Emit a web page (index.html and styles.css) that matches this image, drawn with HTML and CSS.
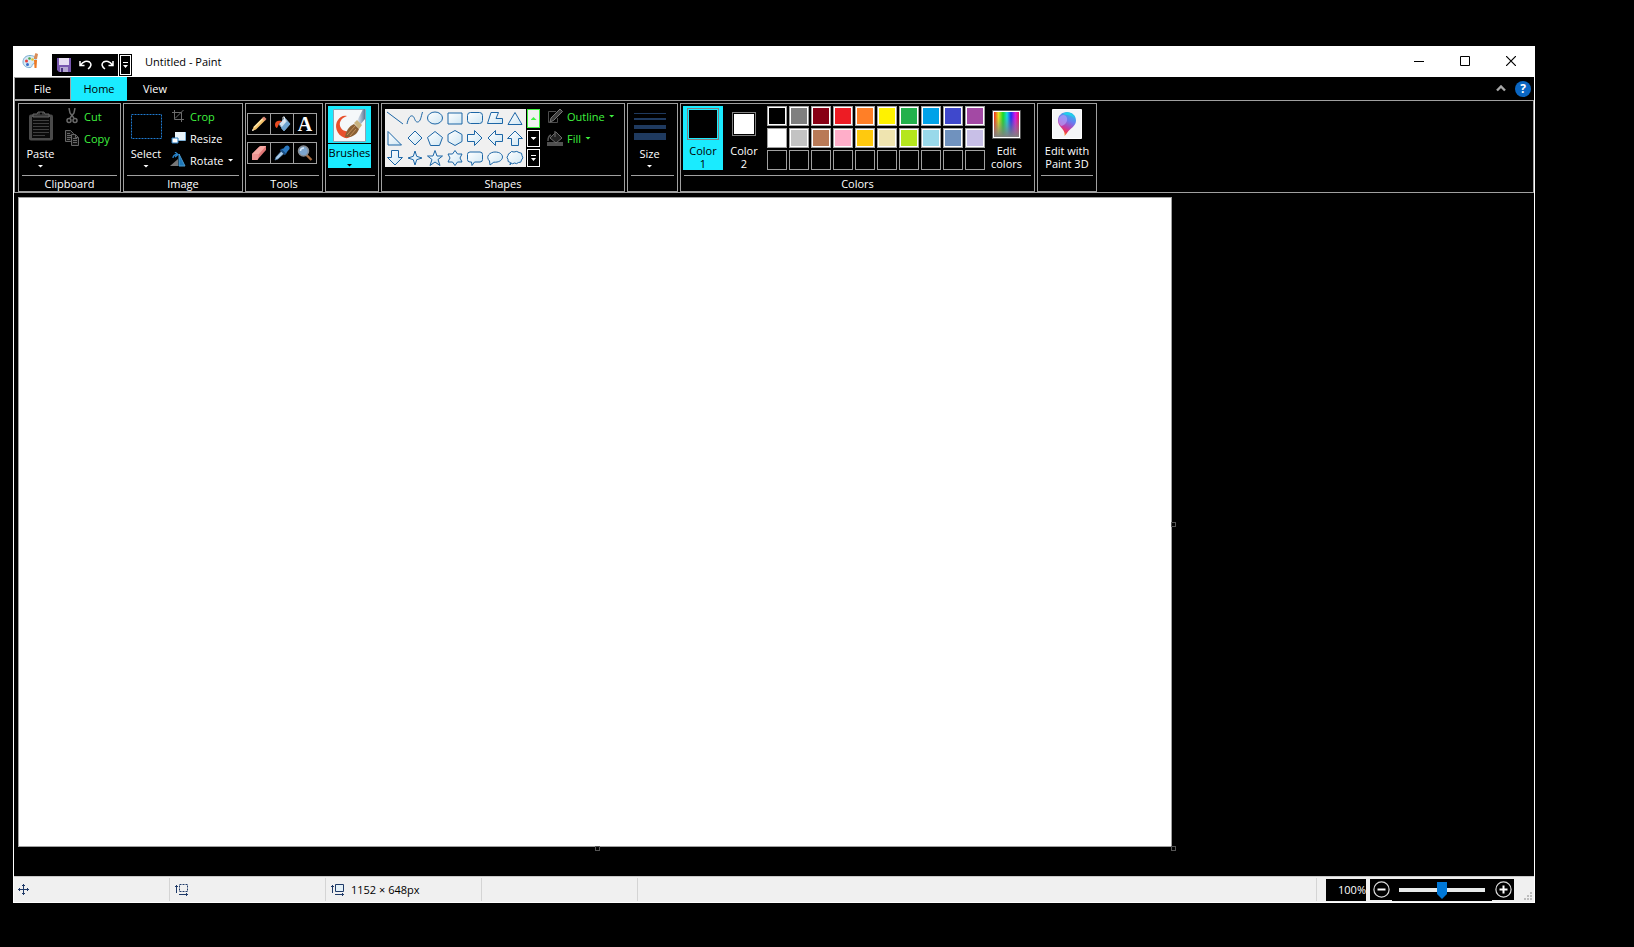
FILE: index.html
```html
<!DOCTYPE html>
<html lang="en">
<head>
<meta charset="utf-8">
<title>Untitled - Paint</title>
<link rel="stylesheet" href="styles.css">
</head>
<body>
<svg class="defs" width="0" height="0" aria-hidden="true">
  <defs>
    <linearGradient id="glass" x1="0" y1="0" x2="1" y2="1"><stop offset="0" stop-color="#fff"/><stop offset="1" stop-color="#cfe6f3"/></linearGradient>
    <linearGradient id="rainbow"><stop offset="0" stop-color="#f02a1c"/><stop offset=".18" stop-color="#e8e020"/><stop offset=".36" stop-color="#18d828"/><stop offset=".52" stop-color="#18d8e0"/><stop offset=".68" stop-color="#2030f0"/><stop offset=".85" stop-color="#d818e8"/><stop offset="1" stop-color="#e81858"/></linearGradient>
    <linearGradient id="fade" x2="0" y2="1"><stop offset=".2" stop-color="#808080" stop-opacity="0"/><stop offset="1" stop-color="#808080"/></linearGradient>
    <linearGradient id="drop" x1=".7" y1="0" x2=".3" y2="1"><stop offset="0" stop-color="#22c4ea"/><stop offset=".35" stop-color="#6a7af0"/><stop offset=".65" stop-color="#c43aa8"/><stop offset=".82" stop-color="#ee3c4c"/><stop offset="1" stop-color="#ffc020"/></linearGradient>
    <linearGradient id="steel"><stop offset="0" stop-color="#e8f0f8"/><stop offset="1" stop-color="#5c7896"/></linearGradient>
  </defs>
</svg>
<div class="window">
  <header class="titlebar">
    <svg class="app-icon" width="17" height="17" viewBox="0 0 17 17"><path d="M1 9c0-4 3-6.500 7-6.500s6 2 6 5-1.500 3-3 3.500 0 3-3 3.500S1 13 1 9z" fill="#d5e9f6" stroke="#7badd0"/><circle cx="4.500" cy="8" r="1.500" fill="#e8403a"/><circle cx="7.500" cy="5.500" r="1.300" fill="#4aa44a"/><circle cx="10.500" cy="6.500" r="1.300" fill="#e3c62c"/><circle cx="5.500" cy="11.500" r="1.500" fill="#3c6cc8"/><path d="M12 7l.5 8h2L15 7z" fill="#ee7a24"/><path d="M12 6V4l1.500-4L16 1l-1 5z" fill="#d98b58"/></svg>
    <div class="quick">
      <button aria-label="Save"><svg width="14" height="14" viewBox="0 0 14 14"><path d="M0 0h14v14H2l-2-2z" fill="#7958b0"/><path d="M2 0h10v7H2z" fill="#e6def2"/><path d="M3 9h8v5H3z" fill="#b5a7d2"/><path d="M4 10h2v4H4z" fill="#4b3580"/></svg></button>
      <button aria-label="Undo"><svg width="13" height="10" viewBox="0 0 13 10"><path d="M1 1v4.500h4.500M1.500 5.200C4 1 8 .5 10.500 2c2.500 2 1.500 5-1.500 7" fill="none" stroke="#fff" stroke-width="1.500"/></svg></button>
      <button aria-label="Redo"><svg width="13" height="10" viewBox="0 0 13 10"><path d="M12 1v4.500H7.500M11.500 5.200C9 1 5 .5 2.500 2 0 4 1 7 4 9" fill="none" stroke="#fff" stroke-width="1.500"/></svg></button>
    </div>
    <button class="quick-more" aria-label="Customize Quick Access Toolbar"><svg width="5" height="6" viewBox="0 0 5 6"><path d="M0 0h5v1H0zM0 3h5L2.500 6z" fill="#fff"/></svg></button>
    <h1 class="title">Untitled - Paint</h1>
    <div class="controls">
      <button aria-label="Minimize"><svg width="10" height="10"><path d="M0 5.500h10" stroke="#000"/></svg></button>
      <button aria-label="Maximize"><svg width="10" height="10"><path d="M.5.500h9v9h-9z" fill="none" stroke="#000"/></svg></button>
      <button aria-label="Close"><svg width="10" height="10"><path d="M0 0l10 10M10 0L0 10" stroke="#000" stroke-width="1.200"/></svg></button>
    </div>
  </header>

  <nav class="tabs">
    <button class="tab file">File</button>
    <button class="tab active">Home</button>
    <button class="tab">View</button>
    <span class="spacer"></span>
    <button class="icon-only" aria-label="Minimize the Ribbon"><svg width="10" height="7" viewBox="0 0 10 7"><path d="M1 5.500l4-4 4 4" fill="none" stroke="#a8a8a8" stroke-width="2.400"/></svg></button>
    <button class="icon-only" aria-label="Help"><span class="help">?</span></button>
  </nav>

  <div class="ribbon">
    <section class="group clipboard">
      <div class="body">
        <button class="big"><span class="pic"><svg width="26" height="32" viewBox="0 0 26 32"><path d="M3 3.500h20q2 0 2 2v22q0 2-2 2H3q-2 0-2-2v-22q0-2 2-2z" fill="#4a4a4a"/><path d="M4 6h18v21H4z" fill="#0b0b0b"/><path d="M5 9.500h16M5 12.500h16M5 15.500h16M5 18.500h16M5 21.500h16M5 24.500h12" stroke="#3f3f3f"/><path d="M5 3h4l1-2h6l1 2h4v3H5z" fill="#383838" stroke="#666"/><circle cx="13" cy="2.500" r="1" fill="#000"/></svg></span>Paste<i class="caret"></i></button>
        <div class="stack">
          <button class="small" disabled><svg width="16" height="16" viewBox="0 0 16 16"><g fill="none" stroke="#6a6a6a" stroke-width="1.500"><path d="M5 0l1 5 4 5M11 0l-1 5-4 5"/><circle cx="5" cy="12.500" r="2"/><circle cx="11" cy="12.500" r="2"/></g></svg>Cut</button>
          <button class="small" disabled><svg width="16" height="16" viewBox="0 0 16 16"><g fill="#141414" stroke="#666"><path d="M1.500.500h5l3 3v8h-8z"/><path d="M3 3.500h3M3 5.500h5M3 7.500h5M3 9.500h3"/><path d="M7.500 4.500h4l3 3v8h-7z"/><path d="M9 8.500h4M9 10.500h4M9 12.500h4M11.500 5v2.500H14" /></g></svg>Copy</button>
        </div>
      </div>
      <h2>Clipboard</h2>
    </section>

    <section class="group image">
      <div class="body">
        <button class="big"><span class="pic"><svg width="31" height="25"><path d="M.5.500h30v24H.5z" fill="none" stroke="#1f7ad0" stroke-dasharray="2 1"/></svg></span>Select<i class="caret"></i></button>
        <div class="stack">
          <button class="small" disabled><svg width="16" height="16" viewBox="0 0 16 16"><path d="M4.500 2v9.500H14M2 4.500h9.500V14M13.500 2L5 10.500" fill="none" stroke="#6c6c6c"/></svg>Crop</button>
          <button class="small"><svg width="16" height="16" viewBox="0 0 16 16"><path d="M5 2h10v9H5z" fill="#eaf5fb"/><path d="M5 10.500h10.500V2" fill="none" stroke="#7fb2d8"/><path d="M2 8h6v5H2z" fill="#fff" stroke="#2a7cc0"/></svg>Resize</button>
          <button class="small"><svg width="16" height="16" viewBox="0 0 16 16"><path d="M0 14h8V7z" fill="#777"/><path d="M9 14V2l6 12z" fill="#1f78b8" stroke="#4b9bd0"/><path d="M3 6c0-2 1.500-3.500 4-3.500M5 0l3 2.500L5 5" fill="none" stroke="#2884cc" stroke-width="1.300"/></svg>Rotate<i class="caret"></i></button>
        </div>
      </div>
      <h2>Image</h2>
    </section>

    <section class="group tools">
      <div class="body">
        <div class="toolgrid">
          <button aria-label="Pencil"><svg width="16" height="16" viewBox="0 0 16 16"><path d="M1 15l1.500-4L12 1.500l2.500 2.500L5 13.500z" fill="#f3c169"/><path d="M2.500 11L12 1.500l1 1-9.500 9.500z" fill="#ffe8a8"/><path d="M11 2.500L13 .5l2.500 2.500-2 2z" fill="#e08a78"/><path d="M1 15l.8-2 1.200 1.200z" fill="#fff"/></svg></button>
          <button aria-label="Fill with color"><svg width="17" height="17" viewBox="0 0 17 17"><path d="M5 8l6-6 5 6-6 7z" fill="#cfe0ee" stroke="#6f93b4"/><path d="M10 15l6-7-3-3-6 7z" fill="#6fa3cf"/><path d="M9 8V1h1.500v6" fill="none" stroke="#dfe9f2"/><path d="M8 5C4 4 1 5 1 8.500c0 2 1 3.500 2 3.500 1.500-2 1-4 5-7z" fill="#e84a20"/></svg></button>
          <button class="letter" aria-label="Text">A</button>
          <button aria-label="Eraser"><svg width="16" height="16" viewBox="0 0 16 16"><path d="M1 9l7-7q1-1 2-1h5v4l-8 9q-1 1-2 1H1z" fill="#e07878"/><path d="M1 9l7-7q1-1 2-1h5L8 9z" fill="#f6a9a3"/><path d="M1 9h7l-1 5.500-1 .5H1z" fill="#ef9492"/></svg></button>
          <button aria-label="Color picker"><svg width="16" height="16" viewBox="0 0 16 16"><path d="M1 15l1-3 6-6.500L10.500 8 4 14z" fill="#a7c9e6" stroke="#4e7ca8" stroke-width=".7"/><path d="M7 4l5 5 1-2 2.500-3Q16 1 13.500.5q-2-.5-4 3z" fill="#2a78c0"/><path d="M6.500 4.500l5 5" stroke="#19518a" stroke-width="2"/></svg></button>
          <button aria-label="Magnifier"><svg width="16" height="16" viewBox="0 0 16 16"><path d="M9.500 10l5 5" stroke="#a86c40" stroke-width="2.400"/><circle cx="6.500" cy="6" r="5" fill="#7da4cc" stroke="#888d94" stroke-width="1.500"/><path d="M3.500 6q0-3 3.500-3" stroke="#d6e8f8" stroke-width="1.500" fill="none"/></svg></button>
        </div>
      </div>
      <h2>Tools</h2>
    </section>

    <section class="group brushes">
      <div class="body">
        <button class="big cyan split"><span class="pic"><svg width="33" height="33" viewBox="0 0 33 33"><path d="M.5.500h32v32H.5z" fill="#f5f8fa" stroke="#8ca4b4"/><path d="M12 29C3 26 1 16 5 11c2-3 5-5 9-4-6 2-9 7-6 12 2 4 8 3 11 5 2 2-3 6-7 5z" fill="#e8502c"/><path d="M24 12l6-12h2v10l-5 6z" fill="url(#steel)"/><path d="M21 14l3-3 5 5-3 4z" fill="#c9b37e"/><path d="M12 28c1-6 4-11 9-13l5 5c-2 6-8 9-14 8z" fill="#8a6034"/><path d="M14 26l8-9M17 27l6-7" stroke="#c4925c"/></svg></span>Brushes<i class="caret"></i></button>
      </div>
      <h2></h2>
    </section>

    <section class="group shapes">
      <div class="body">
        <div class="gallery">
          <button aria-label="Line"><svg viewBox="0 0 18 18"><path d="M1 3l16 12"/></svg></button>
          <button aria-label="Curve"><svg viewBox="0 0 18 18"><path class="open" d="M1 15c1-5 3-9 5.500-8s2 6 5 6S15 8 16.500 3"/></svg></button>
          <button aria-label="Oval"><svg viewBox="0 0 18 18"><ellipse cx="9" cy="9" rx="7.500" ry="6"/></svg></button>
          <button aria-label="Rectangle"><svg viewBox="0 0 18 18"><path d="M2 4h14v11H2z"/></svg></button>
          <button aria-label="Rounded rectangle"><svg viewBox="0 0 18 18"><rect x="1.500" y="3.500" width="15" height="11" rx="3"/></svg></button>
          <button aria-label="Polygon"><svg viewBox="0 0 18 18"><path d="M5 3.500h7.500L10 9.500h6.500v5H1.500z"/></svg></button>
          <button aria-label="Triangle"><svg viewBox="0 0 18 18"><path d="M9 3.500l7 12H2z"/></svg></button>
          <button aria-label="Right triangle"><svg viewBox="0 0 18 18"><path d="M2 2.500v13.500h13.500z"/></svg></button>
          <button aria-label="Diamond"><svg viewBox="0 0 18 18"><path d="M9 2l7 7-7 7-7-7z"/></svg></button>
          <button aria-label="Pentagon"><svg viewBox="0 0 18 18"><path d="M9 2.500l7.500 6-3 8h-9l-3-8z"/></svg></button>
          <button aria-label="Hexagon"><svg viewBox="0 0 18 18"><path d="M9 1.500l7 4v7l-7 4-7-4v-7z"/></svg></button>
          <button aria-label="Right arrow"><svg viewBox="0 0 18 18"><path d="M1.500 5.500h7v-4L16 9l-7.500 7.500v-4h-7z"/></svg></button>
          <button aria-label="Left arrow"><svg viewBox="0 0 18 18"><path d="M16.500 5.500h-7v-4L2 9l7.500 7.500v-4h7z"/></svg></button>
          <button aria-label="Up arrow"><svg viewBox="0 0 18 18"><path d="M5.500 16.500v-7h-4L9 2l7.500 7.500h-4v7z"/></svg></button>
          <button aria-label="Down arrow"><svg viewBox="0 0 18 18"><path d="M5.500 1.500v7h-4L9 16l7.500-7.500h-4v-7z"/></svg></button>
          <button aria-label="Four-point star"><svg viewBox="0 0 18 18"><path d="M9 2l1.700 5.300L16 9l-5.300 1.700L9 16l-1.700-5.300L2 9l5.300-1.700z"/></svg></button>
          <button aria-label="Five-point star"><svg viewBox="0 0 18 18"><path d="M9 1.500l2 5.500h5.500L12 10.500l2 6-5-3.500-5 3.500 2-6L1.500 7H7z"/></svg></button>
          <button aria-label="Six-point star"><svg viewBox="0 0 18 18"><path d="M9 1.500L11.500 5H16l-2 4 2 4h-4.500L9 16.500 6.500 13H2l2-4-2-4h4.500z"/></svg></button>
          <button aria-label="Rounded rectangular callout"><svg viewBox="0 0 18 18"><path d="M4 3h10q2.500 0 2.500 2.500v5q0 2.500-2.500 2.500H8.500L6 16.500 5.500 13H4q-2.500 0-2.500-2.500v-5Q1.500 3 4 3z"/></svg></button>
          <button aria-label="Oval callout"><svg viewBox="0 0 18 18"><path d="M3.500 12C-1 7.500 4 3 9 3s7.500 2.500 7.500 5S14 13 9.500 13.200H7.800L4 16z"/></svg></button>
          <button aria-label="Cloud callout"><svg viewBox="0 0 18 18"><path d="M4 4q1-2.500 4-1 3-1.500 5 .5 3.500 0 3 3 2 2.500-.5 4.500 0 3-3 2.500-2 2-4 .5-2 1.500-3.500 0L4 16l.5-2.500Q1 13 2 10.500 0 8 2 6.500 2 4.500 4 4z"/></svg></button>
        </div>
        <div class="spin">
          <button class="off" aria-label="Scroll up" disabled><i class="caret up"></i></button>
          <button aria-label="Scroll down"><i class="caret"></i></button>
          <button aria-label="More shapes"><svg width="5" height="6" viewBox="0 0 5 6"><path d="M0 0h5v1H0zM0 3h5L2.500 6z" fill="#fff"/></svg></button>
        </div>
        <div class="stack">
          <button class="small" disabled><svg width="16" height="16" viewBox="0 0 16 16"><path d="M9 3.500H1.500v11h9V10" fill="none" stroke="#4c4c4c"/><path d="M3 14l1-4 9-9 2.500 2.500L6.500 12.500z" fill="#3c3c3c" stroke="#777"/></svg>Outline<i class="caret"></i></button>
          <button class="small" disabled><svg width="16" height="16" viewBox="0 0 16 16"><path d="M0 12h16v4H0z" fill="#505050"/><path d="M3 8l6-6 6 6-6 5z" fill="#222" stroke="#6c6c6c"/><path d="M8 7V1M4 5Q1 6 1 11" stroke="#555" stroke-width="1.500" fill="none"/></svg>Fill<i class="caret"></i></button>
        </div>
      </div>
      <h2>Shapes</h2>
    </section>

    <section class="group size">
      <div class="body">
        <button class="big"><span class="pic"><svg width="32" height="30" viewBox="0 0 32 30"><path d="M0 1h32v1H0zM0 6h32v2H0zM0 13h32v4H0zM0 21h32v7H0z" fill="#1f3a5f"/></svg></span>Size<i class="caret"></i></button>
      </div>
      <h2></h2>
    </section>

    <section class="group colors">
      <div class="body">
        <button class="big cyan"><span class="pic"><b class="well primary"></b></span>Color<br>1</button>
        <button class="big"><span class="pic"><b class="well secondary"></b></span>Color<br>2</button>
        <div class="palette">
          <button class="c-black" aria-label="Black"></button><button class="c-gray" aria-label="Gray-50%"></button><button class="c-darkred" aria-label="Dark red"></button><button class="c-red" aria-label="Red"></button><button class="c-orange" aria-label="Orange"></button><button class="c-yellow" aria-label="Yellow"></button><button class="c-green" aria-label="Green"></button><button class="c-turquoise" aria-label="Turquoise"></button><button class="c-indigo" aria-label="Indigo"></button><button class="c-purple" aria-label="Purple"></button>
          <button class="c-white" aria-label="White"></button><button class="c-silver" aria-label="Gray-25%"></button><button class="c-brown" aria-label="Brown"></button><button class="c-rose" aria-label="Rose"></button><button class="c-gold" aria-label="Gold"></button><button class="c-tan" aria-label="Light yellow"></button><button class="c-lime" aria-label="Lime"></button><button class="c-aqua" aria-label="Light turquoise"></button><button class="c-bluegray" aria-label="Blue-gray"></button><button class="c-lavender" aria-label="Lavender"></button>
          <button class="empty" aria-label="Custom 1"></button><button class="empty" aria-label="Custom 2"></button><button class="empty" aria-label="Custom 3"></button><button class="empty" aria-label="Custom 4"></button><button class="empty" aria-label="Custom 5"></button><button class="empty" aria-label="Custom 6"></button><button class="empty" aria-label="Custom 7"></button><button class="empty" aria-label="Custom 8"></button><button class="empty" aria-label="Custom 9"></button><button class="empty" aria-label="Custom 10"></button>
        </div>
        <button class="big edit"><span class="pic"><svg width="29" height="29" viewBox="0 0 29 29"><path d="M.5.500h28v28H.5z" fill="#fff" stroke="#555"/><path d="M2 2h25v25H2z" fill="url(#rainbow)"/><path d="M2 2h25v25H2z" fill="url(#fade)"/></svg></span>Edit<br>colors</button>
      </div>
      <h2>Colors</h2>
    </section>

    <section class="group paint3d">
      <div class="body">
        <button class="big"><span class="pic"><svg width="30" height="30" viewBox="0 0 30 30"><path d="M.5.500h29v29H.5z" fill="#f4f5f7" stroke="#fff"/><path d="M15 3c5 0 9 3.500 9 8.500 0 5-4 7-7.500 10.500-1.500 1.500-2 3.500-4 5 .5-3-.5-5-2.500-7.500-2-2.500-4-4.500-4-8C6 6.500 10 3 15 3z" fill="url(#drop)"/><path d="M7 9c2-4 7-4 8 0s-3 8-6 8c-2-2-3-5-2-8z" fill="#b49cf8" opacity=".7"/><path d="M11 5c4-3 10-1 12 4-4-3-8-3-12-4z" fill="#20d0e8"/></svg></span>Edit with<br>Paint 3D</button>
      </div>
      <h2></h2>
    </section>
  </div>

  <main class="workspace">
    <div class="sheet"><i class="handle right"></i><i class="handle bottom"></i><i class="handle corner"></i></div>
  </main>

  <footer class="status">
    <div class="cell"><svg width="11" height="11" viewBox="0 0 11 11"><path d="M5.500 0v11M0 5.500h11M4 1.500h3M4 9.500h3M1.500 4v3M9.500 4v3" stroke="#1f3a68" fill="none"/></svg></div>
    <div class="cell"><svg width="14" height="12" viewBox="0 0 14 12"><path d="M1.500 1v8M0 2.500h3M4 10.500h9M11.500 9v3" stroke="#1f3a68"/><path d="M4.500.500h8v7h-8z" fill="none" stroke="#1f3a68" stroke-dasharray="2 1"/></svg></div>
    <div class="cell"><svg width="14" height="12" viewBox="0 0 14 12"><path d="M1.500 1v8M0 2.500h3M4 10.500h9M11.500 9v3" stroke="#1f3a68"/><path d="M4.500.500h8v7h-8z" fill="#e4f1f8" stroke="#1f3a68"/></svg><span>1152 × 648px</span></div>
    <div class="cell"></div>
    <div class="cell rest"></div>
    <output class="percent" for="zoom">100%</output>
    <div class="zoom">
      <button aria-label="Zoom out"><svg width="17" height="17" viewBox="0 0 17 17"><circle cx="8.500" cy="8.500" r="7.600" fill="none" stroke="#ddd" stroke-width="1.200"/><path d="M4.500 8.500h8" stroke="#fff" stroke-width="2"/></svg></button>
      <input id="zoom" type="range" min="0" max="100" value="50" aria-label="Zoom">
      <button aria-label="Zoom in"><svg width="17" height="17" viewBox="0 0 17 17"><circle cx="8.500" cy="8.500" r="7.600" fill="none" stroke="#ddd" stroke-width="1.200"/><path d="M4.500 8.500h8M8.500 4.500v8" stroke="#fff" stroke-width="2"/></svg></button>
    </div>
    <svg class="grip" width="8" height="8" viewBox="0 0 8 8"><path d="M6 0h2v2H6zM3 3h2v2H3zM6 3h2v2H6zM0 6h2v2H0zM3 6h2v2H3zM6 6h2v2H6z" fill="#bdbdbd"/></svg>
  </footer>
</div>
</body>
</html>
```
FILE: styles.css
```css
:root {
  --line: #a0a0a0;
  --cyan: #1aebff;
  --green: #3ff23f;
}

* { box-sizing: border-box; }

body {
  margin: 0;
  min-height: 100vh;
  padding: 46px 99px 44px 13px;
  display: flex;
  background: #000;
  color: #fff;
  font: 11px/13px "Open Sans", "Noto Sans", sans-serif;
}

button {
  margin: 0;
  padding: 0;
  border: 0;
  background: none;
  color: inherit;
  font: inherit;
}

svg { display: block; flex: none; }
.defs { position: absolute; }

h1, h2 { margin: 0; font: inherit; }

.window {
  flex: 1;
  min-width: 0;
  display: flex;
  flex-direction: column;
  border: 1px solid #fff;
}

/* Title bar */
.titlebar {
  display: flex;
  align-items: flex-end;
  height: 30px;
  padding-left: 8px;
  background: #fff;
  color: #000;
}
.app-icon { align-self: center; margin-bottom: 2px; }
.quick {
  display: flex;
  height: 22px;
  margin: 0 1px 1px 13px;
  padding-left: 1px;
  width: 66px;
  background: #000;
}
.quick button, .quick-more {
  flex: 1;
  display: flex;
  align-items: center;
  justify-content: center;
}
.quick-more {
  flex: none;
  width: 13px;
  height: 22px;
  margin-bottom: 1px;
  background: #000;
  border: 1px solid #fff;
  outline: 1px solid #000;
  outline-offset: -1px;
  box-shadow: inset 0 0 0 1px #fff;
}
.title { margin-left: 13px; line-height: 30px; }
.controls { display: flex; align-self: stretch; margin-left: auto; }
.controls button {
  width: 46px;
  display: flex;
  align-items: center;
  justify-content: center;
  padding-bottom: 2px;
}

/* Tabs */
.tabs { display: flex; height: 23px; }
.tab { width: 56px; padding-bottom: 1px; }
.tab.file { width: 57px; border: 1px solid var(--line); padding: 0; }
.tab.active {
  height: 24px;
  background: var(--cyan);
  color: #000;
  z-index: 1;
}
.spacer { flex: 1; }
.icon-only { width: 22px; display: flex; align-items: center; justify-content: center; }
.help {
  width: 16px;
  height: 16px;
  border-radius: 8px;
  background: #0a66c2;
  font-weight: bold;
  font-size: 12px;
  line-height: 16px;
}

/* Ribbon */
.ribbon {
  display: flex;
  gap: 2px;
  padding: 2px 3px 0;
  border: 1px solid var(--line);
}
.group {
  display: flex;
  flex-direction: column;
  border: 1px solid var(--line);
}
.clipboard { width: 103px; }
.image { width: 120px; }
.tools { width: 78px; }
.brushes { width: 54px; }
.shapes { width: 244px; }
.size { width: 51px; }
.colors { width: 355px; }
.paint3d { width: 60px; }

.body { display: flex; height: 71px; padding: 1px 2px 0; }
.group h2 {
  height: 16px;
  margin: 0 3px;
  border-top: 1px solid var(--line);
  text-align: center;
  line-height: 15px;
}

.big {
  width: 40px;
  height: 64px;
  margin-top: 1px;
  display: block;
  text-align: center;
  white-space: nowrap;
}
.clipboard .big, .size .big { width: 39px; }
.pic {
  display: flex;
  height: 36px;
  margin-bottom: 2px;
  align-items: center;
  justify-content: center;
}
.cyan { background: var(--cyan); color: #000; }
.brushes .big { width: 43px; height: 62px; }
.split .pic { height: 36px; margin-bottom: 2px; border-bottom: 1px solid #000; }
.paint3d .big { width: 54px; }
.edit { width: 41px; margin-left: 1px; }

.caret {
  display: inline-block;
  width: 6px;
  height: 3px;
  background: currentColor;
  clip-path: polygon(0 0, 100% 0, 50% 100%);
}
.caret.up { clip-path: polygon(50% 0, 100% 100%, 0 100%); }
.big .caret { display: block; margin: 5px auto 0; }

.stack { margin-left: 2px; }
.small {
  display: flex;
  align-items: center;
  gap: 4px;
  height: 22px;
  padding-left: 2px;
}
.small:disabled { color: var(--green); }

.toolgrid {
  display: grid;
  grid-template-columns: repeat(3, 23px);
  grid-auto-rows: 22px;
  row-gap: 7px;
  margin-top: 8px;
}
.tools .body { padding-left: 1px; }
.toolgrid button {
  width: 24px;
  border: 1px solid var(--line);
  display: flex;
  align-items: center;
  justify-content: center;
}
.toolgrid .letter { font: bold 20px/20px "Liberation Serif", serif; }

.gallery {
  display: grid;
  grid-template-columns: repeat(7, 18px);
  grid-auto-rows: 18px;
  gap: 2px;
  height: 58px;
  margin: 4px 1px 0;
  padding: 0 2px 0 1px;
  background: #f0f0f0;
}
.gallery svg {
  width: 18px;
  height: 18px;
  fill: url(#glass);
  stroke: #1c66a6;
}
.gallery .open { fill: none; }
.spin {
  display: grid;
  grid-template-rows: 19px 17px 18px;
  gap: 2px;
  width: 13px;
  height: 58px;
  margin-top: 4px;
}
.spin button {
  display: flex;
  align-items: center;
  justify-content: center;
  border: 1px solid #fff;
}
.spin .off { background: #f0f0f0; border-color: var(--green); color: var(--green); }
.shapes .stack { margin-left: 5px; }

.well { display: block; border: 1px solid #808080; padding: 1px; background-clip: content-box; }
.primary { width: 32px; height: 32px; background-color: #000; }
.secondary { width: 24px; height: 24px; background-color: #fff; }
.cyan + .big { margin-left: 1px; }

.palette {
  display: grid;
  grid-template-columns: repeat(10, 20px);
  grid-auto-rows: 20px;
  gap: 2px;
  margin: 1px 0 0 3px;
}
.palette button { border: 1px solid var(--line); box-shadow: inset 0 0 0 1px #fff; }
.palette .empty { box-shadow: none; }
.c-black { background: #000; }
.c-gray { background: #7f7f7f; }
.c-darkred { background: #880015; }
.c-red { background: #ed1c24; }
.c-orange { background: #ff7f27; }
.c-yellow { background: #fff200; }
.c-green { background: #22b14c; }
.c-turquoise { background: #00a2e8; }
.c-indigo { background: #3f48cc; }
.c-purple { background: #a349a4; }
.c-white { background: #fff; }
.c-silver { background: #c3c3c3; }
.c-brown { background: #b97a57; }
.c-rose { background: #ffaec9; }
.c-gold { background: #ffc90e; }
.c-tan { background: #efe4b0; }
.c-lime { background: #b5e61d; }
.c-aqua { background: #99d9ea; }
.c-bluegray { background: #7092be; }
.c-lavender { background: #c8bfe7; }

/* Drawing area */
.workspace { flex: 1; padding: 4px; }
.sheet {
  position: relative;
  width: 1154px;
  height: 650px;
  border: 1px solid var(--line);
  background: #fff;
}
.handle {
  position: absolute;
  width: 5px;
  height: 5px;
  border: 1px solid #555;
  background: #000;
}
.right { right: -5px; top: 50%; }
.bottom { bottom: -5px; left: 50%; }
.corner { right: -5px; bottom: -5px; }

/* Status bar */
.status {
  display: flex;
  align-items: stretch;
  height: 26px;
  padding-top: 1px;
  border-top: 1px solid #c8c8c8;
  background: #f0f0f0;
  color: #000;
}
.cell {
  display: flex;
  align-items: center;
  gap: 6px;
  width: 156px;
  height: 23px;
  padding-left: 4px;
  border-right: 1px solid #d4d4d4;
}
.cell + .cell { padding-left: 5px; }
.rest { flex: 1; }
.percent {
  width: 40px;
  height: 22px;
  margin: 1px 4px 0 9px;
  background: #000;
  color: #fff;
  text-align: right;
  line-height: 22px;
}
.zoom { display: flex; align-items: flex-start; width: 144px; margin-top: 1px; }
.zoom button {
  display: flex;
  align-items: center;
  justify-content: center;
  width: 22px;
  height: 21px;
  background: #000;
}
.zoom input {
  flex: 1;
  min-width: 0;
  height: 22px;
  margin: 0;
  padding: 0 7px;
  appearance: none;
  background: #000;
}
.zoom input::-webkit-slider-runnable-track { height: 4px; background: #e7eaea; }
.zoom input::-webkit-slider-thumb {
  appearance: none;
  width: 10px;
  height: 17px;
  margin-top: -6px;
  background: #0078d7;
  clip-path: polygon(0 0, 100% 0, 100% 70%, 50% 100%, 0 70%);
}
.grip { align-self: flex-end; margin: 0 2px 2px 10px; }
```
